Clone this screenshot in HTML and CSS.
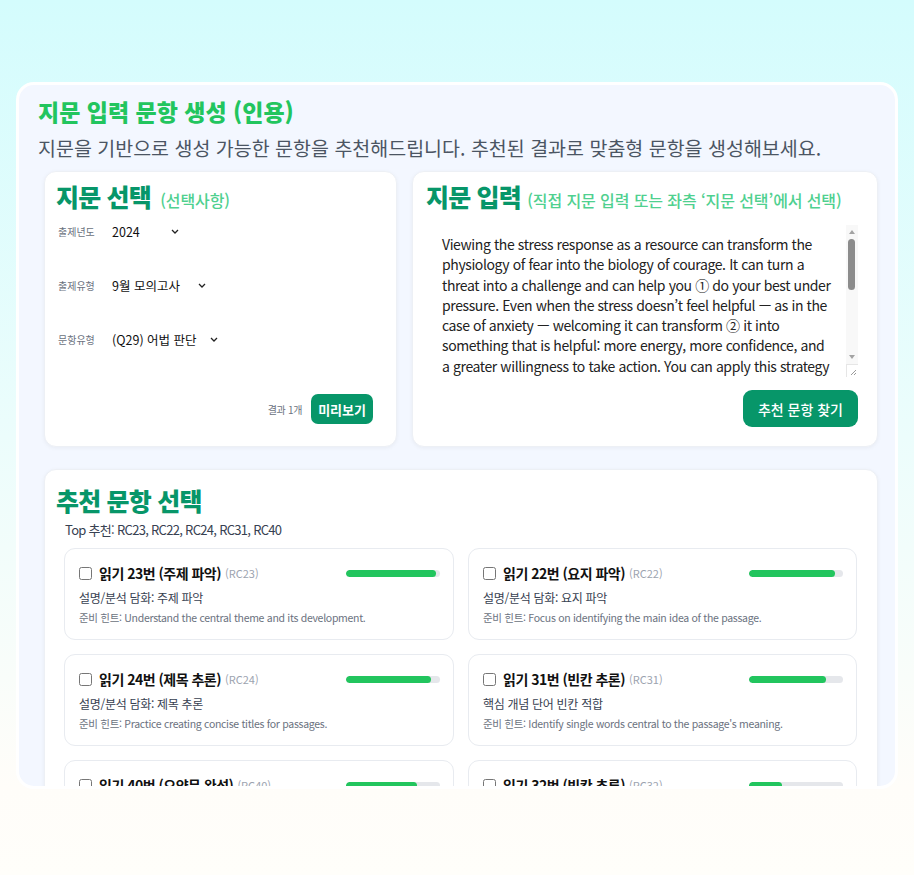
FILE: index.html
```html
<!DOCTYPE html>
<html lang="ko">
<head>
  <meta charset="UTF-8" />
  <meta name="viewport" content="width=device-width, initial-scale=1.0"/>
  <title>지문 입력 문항 생성</title>
  <link rel="stylesheet" href="styles.css">
</head>
<body>
  <!-- 메인 패널 -->
  <section class="panel">
    <h1 class="panel-title">지문 입력 문항 생성 (인용)</h1>
    <p class="panel-desc">지문을 기반으로 생성 가능한 문항을 추천해드립니다. 추천된 결과로 맞춤형 문항을 생성해보세요.</p>

    <div class="top-row">
      <!-- 지문 선택 -->
      <div class="card card-select">
        <h2 class="card-title">지문 선택 <small>(선택사항)</small></h2>
        <div class="fields">
          <div class="field">
            <span class="field-label">출제년도</span>
            <div class="select select-year">
              <span>2024</span>
              <svg width="8" height="5" viewBox="0 0 8 5"><path d="M1 1l3 3 3-3" fill="none" stroke="#222" stroke-width="1.3"/></svg>
            </div>
          </div>
          <div class="field">
            <span class="field-label">출제유형</span>
            <div class="select select-type">
              <span>9월 모의고사</span>
              <svg width="8" height="5" viewBox="0 0 8 5"><path d="M1 1l3 3 3-3" fill="none" stroke="#222" stroke-width="1.3"/></svg>
            </div>
          </div>
          <div class="field">
            <span class="field-label">문항유형</span>
            <div class="select select-kind">
              <span>(Q29) 어법 판단</span>
              <svg width="8" height="5" viewBox="0 0 8 5"><path d="M1 1l3 3 3-3" fill="none" stroke="#222" stroke-width="1.3"/></svg>
            </div>
          </div>
        </div>
        <div class="preview-row">
          <span class="result-count">결과 1개</span>
          <button class="btn btn-sm">미리보기</button>
        </div>
      </div>

      <!-- 지문 입력 -->
      <div class="card card-input">
        <h2 class="card-title">지문 입력 <small>(직접 지문 입력 또는 좌측 ‘지문 선택’에서 선택)</small></h2>
        <div class="passage-box">
          <textarea class="passage">Viewing the stress response as a resource can transform the physiology of fear into the biology of courage. It can turn a threat into a challenge and can help you ① do your best under pressure. Even when the stress doesn’t feel helpful — as in the case of anxiety — welcoming it can transform ② it into something that is helpful: more energy, more confidence, and a greater willingness to take action. You can apply this strategy in your own life anytime you notice signs of stress. When you feel your heart ③ pounding or your breath quickening, realize that it is your body’s way of trying to give you more energy. If you notice tension in your body, remind yourself that the stress response ④ gives you access to your strength.</textarea>
          <!-- barra de rolagem -->
          <div class="scrollbar">
            <span class="sb-arrow sb-up"></span>
            <span class="sb-track"><span class="sb-thumb"></span></span>
            <span class="sb-arrow sb-down"></span>
            <span class="sb-corner">
              <svg width="8" height="8" viewBox="0 0 8 8"><path d="M7 2L2 7M7 5L5 7" stroke="#9a9a9a" stroke-width="1"/></svg>
            </span>
          </div>
        </div>
        <div class="actions">
          <button class="btn">추천 문항 찾기</button>
        </div>
      </div>
    </div>

    <!-- 추천 문항 -->
    <div class="card card-recommend">
      <h2 class="card-title big">추천 문항 선택</h2>
      <p class="top-picks">Top 추천: RC23, RC22, RC24, RC31, RC40</p>
      <div class="rec-grid">
        <label class="rec-item">
          <div class="rec-head">
            <input type="checkbox">
            <span class="rec-title">읽기 23번 (주제 파악)</span>
            <span class="rec-code">(RC23)</span>
            <div class="bar"><div class="bar-fill" style="width: 96%"></div></div>
          </div>
          <p class="rec-desc">설명/분석 담화: 주제 파악</p>
          <p class="rec-hint">준비 힌트: Understand the central theme and its development.</p>
        </label>
        <label class="rec-item">
          <div class="rec-head">
            <input type="checkbox">
            <span class="rec-title">읽기 22번 (요지 파악)</span>
            <span class="rec-code">(RC22)</span>
            <div class="bar"><div class="bar-fill" style="width: 91%"></div></div>
          </div>
          <p class="rec-desc">설명/분석 담화: 요지 파악</p>
          <p class="rec-hint">준비 힌트: Focus on identifying the main idea of the passage.</p>
        </label>
        <label class="rec-item">
          <div class="rec-head">
            <input type="checkbox">
            <span class="rec-title">읽기 24번 (제목 추론)</span>
            <span class="rec-code">(RC24)</span>
            <div class="bar"><div class="bar-fill" style="width: 90%"></div></div>
          </div>
          <p class="rec-desc">설명/분석 담화: 제목 추론</p>
          <p class="rec-hint">준비 힌트: Practice creating concise titles for passages.</p>
        </label>
        <label class="rec-item">
          <div class="rec-head">
            <input type="checkbox">
            <span class="rec-title">읽기 31번 (빈칸 추론)</span>
            <span class="rec-code">(RC31)</span>
            <div class="bar"><div class="bar-fill" style="width: 82%"></div></div>
          </div>
          <p class="rec-desc">핵심 개념 단어 빈칸 적합</p>
          <p class="rec-hint">준비 힌트: Identify single words central to the passage's meaning.</p>
        </label>
        <label class="rec-item">
          <div class="rec-head">
            <input type="checkbox">
            <span class="rec-title">읽기 40번 (요약문 완성)</span>
            <span class="rec-code">(RC40)</span>
            <div class="bar"><div class="bar-fill" style="width: 75%"></div></div>
          </div>
          <p class="rec-desc">요약문 빈칸 완성</p>
          <p class="rec-hint">준비 힌트: Summarize the passage in one sentence.</p>
        </label>
        <label class="rec-item">
          <div class="rec-head">
            <input type="checkbox">
            <span class="rec-title">읽기 32번 (빈칸 추론)</span>
            <span class="rec-code">(RC32)</span>
            <div class="bar"><div class="bar-fill" style="width: 35%"></div></div>
          </div>
          <p class="rec-desc">구 단위 빈칸 적합</p>
          <p class="rec-hint">준비 힌트: Look for phrases that complete the logic.</p>
        </label>
      </div>
    </div>
  </section>
</body>
</html>
```

FILE: styles.css
```css
/* Reset básico */
* {
  box-sizing: border-box;
}

body {
  margin: 0;
  min-height: 875px;
  font-family: "Noto Sans CJK KR", "Noto Sans", sans-serif;
  background: linear-gradient(to bottom, #d4fcfd 0%, #ecfdfc 50%, #fffdf9 90%, #fffefa 100%);
}

/* Painel principal */
.panel {
  width: 882px;
  height: 707px;
  margin: 82px 16px 0;
  padding: 11px 17px 0 19px;
  background: #f3f7ff;
  border: 3px solid #fff;
  border-radius: 18px;
  overflow: hidden;
}

.panel-title {
  margin: 0;
  font-size: 23px;
  line-height: 31px;
  font-weight: 900;
  color: #22c55e;
}

.panel-desc {
  margin: 7px 0 9px;
  font-size: 19.5px;
  line-height: 28px;
  color: #4b5563;
  white-space: nowrap;
}

.top-row {
  display: grid;
  grid-template-columns: 353px 466px;
  gap: 15px;
  margin-left: 6px;
}

.card {
  background: #fff;
  border: 1px solid #edf0f5;
  border-radius: 12px;
  box-shadow: 0 1px 4px rgba(15, 23, 42, 0.05);
}

.card-title {
  margin: 0;
  font-size: 25px;
  line-height: 32px;
  font-weight: 900;
  letter-spacing: -0.8px;
  color: #079669;
  white-space: nowrap;
}

.card-title small {
  font-size: 16px;
  line-height: 16px;
  font-weight: 500;
  letter-spacing: -0.1px;
  color: #4fd08f;
}

.card-select .card-title small {
  margin-left: 3px;
}

/* Seleção de passagem */
.card-select {
  height: 276px;
  padding: 8px 23px 22px 11px;
  display: flex;
  flex-direction: column;
}

.fields {
  display: flex;
  flex-direction: column;
  gap: 30px;
  margin-top: 7px;
}

.field {
  display: flex;
  align-items: center;
  height: 24px;
  padding-left: 2px;
}

.field-label {
  width: 54px;
  font-size: 10px;
  color: #6b7280;
}

.select {
  display: flex;
  align-items: center;
  font-size: 12.5px;
  color: #111;
}

.select-year svg { margin-left: 31px; }
.select-type svg { margin-left: 18px; }
.select-kind svg { margin-left: 13px; }

.preview-row {
  margin-top: auto;
  display: flex;
  justify-content: flex-end;
  align-items: center;
  gap: 9px;
}

.result-count {
  font-size: 10px;
  letter-spacing: -0.3px;
  color: #6b7280;
}

.btn {
  height: 37px;
  padding: 0 15px;
  border: none;
  border-radius: 9px;
  background: #079669;
  color: #fff;
  font-family: inherit;
  font-size: 14px;
  font-weight: 500;
  cursor: pointer;
}

.btn-sm {
  height: 30px;
  padding: 0 7px;
  border-radius: 7px;
  font-size: 13px;
  font-weight: 600;
}

/* Entrada de passagem */
.card-input {
  height: 276px;
  padding: 8px 19px 19px 13px;
}

.passage-box {
  display: flex;
  height: 152px;
  margin-top: 13px;
}

.passage {
  flex: 1;
  display: block;
  height: 100%;
  padding: 9px 12px 10px 16px;
  border: none;
  outline: none;
  resize: none;
  overflow: hidden;
  font-family: inherit;
  font-size: 14px;
  line-height: 20.3px;
  letter-spacing: -0.4px;
  color: #222;
  background: #fff;
}

.scrollbar {
  width: 12px;
  display: flex;
  flex-direction: column;
  background: #f8f8f8;
}

.sb-arrow {
  height: 13px;
  display: flex;
  align-items: center;
  justify-content: center;
}

.sb-arrow::before {
  content: "";
  border-left: 3px solid transparent;
  border-right: 3px solid transparent;
}

.sb-up::before {
  border-bottom: 4px solid #a3a3a3;
}

.sb-down::before {
  border-top: 4px solid #a3a3a3;
}

.sb-track {
  flex: 1;
  padding: 1px 3px 0 2px;
}

.sb-thumb {
  display: block;
  height: 51px;
  border-radius: 4px;
  background: #8c8c8c;
}

.sb-corner {
  height: 13px;
  display: flex;
  align-items: flex-end;
  justify-content: flex-end;
  margin-top: 1px;
  padding: 0 1px 1px 0;
  background: #fff;
  border-left: 1px solid #e6e6e6;
  border-top: 1px solid #e6e6e6;
}

.actions {
  display: flex;
  justify-content: flex-end;
  margin-top: 13px;
}

/* Recomendações */
.card-recommend {
  width: 834px;
  margin: 22px 0 0 6px;
  padding: 14px 11px 20px 11px;
}

.top-picks {
  margin: 5px 0 0 9px;
  font-size: 13px;
  line-height: 18px;
  letter-spacing: -0.7px;
  color: #374151;
}

.rec-grid {
  display: grid;
  grid-template-columns: 390px 389px;
  gap: 14px;
  margin: 9px 0 0 8px;
}

.rec-item {
  display: block;
  height: 92px;
  padding: 14px 13px 0 14px;
  border: 1px solid #e8ebf0;
  border-radius: 11px;
  cursor: pointer;
}

.rec-head {
  display: flex;
  align-items: center;
  height: 20px;
}

.rec-head input {
  width: 13px;
  height: 13px;
  margin: 0 7px 0 0;
}

.rec-title {
  font-size: 14px;
  font-weight: 700;
  letter-spacing: -0.5px;
  color: #111;
}

.rec-code {
  margin-left: 4px;
  font-size: 11px;
  color: #9ca3af;
}

.bar {
  margin-left: auto;
  width: 94px;
  height: 7px;
  border-radius: 4px;
  background: #e5e7eb;
  overflow: hidden;
}

.bar-fill {
  height: 100%;
  border-radius: 4px;
  background: #22c55e;
}

.rec-desc {
  margin: 6px 0 0;
  font-size: 12px;
  line-height: 17px;
  letter-spacing: -0.3px;
  color: #374151;
}

.rec-hint {
  margin: 4px 0 0;
  font-size: 10.5px;
  line-height: 16px;
  letter-spacing: -0.3px;
  color: #6b7280;
}
```
